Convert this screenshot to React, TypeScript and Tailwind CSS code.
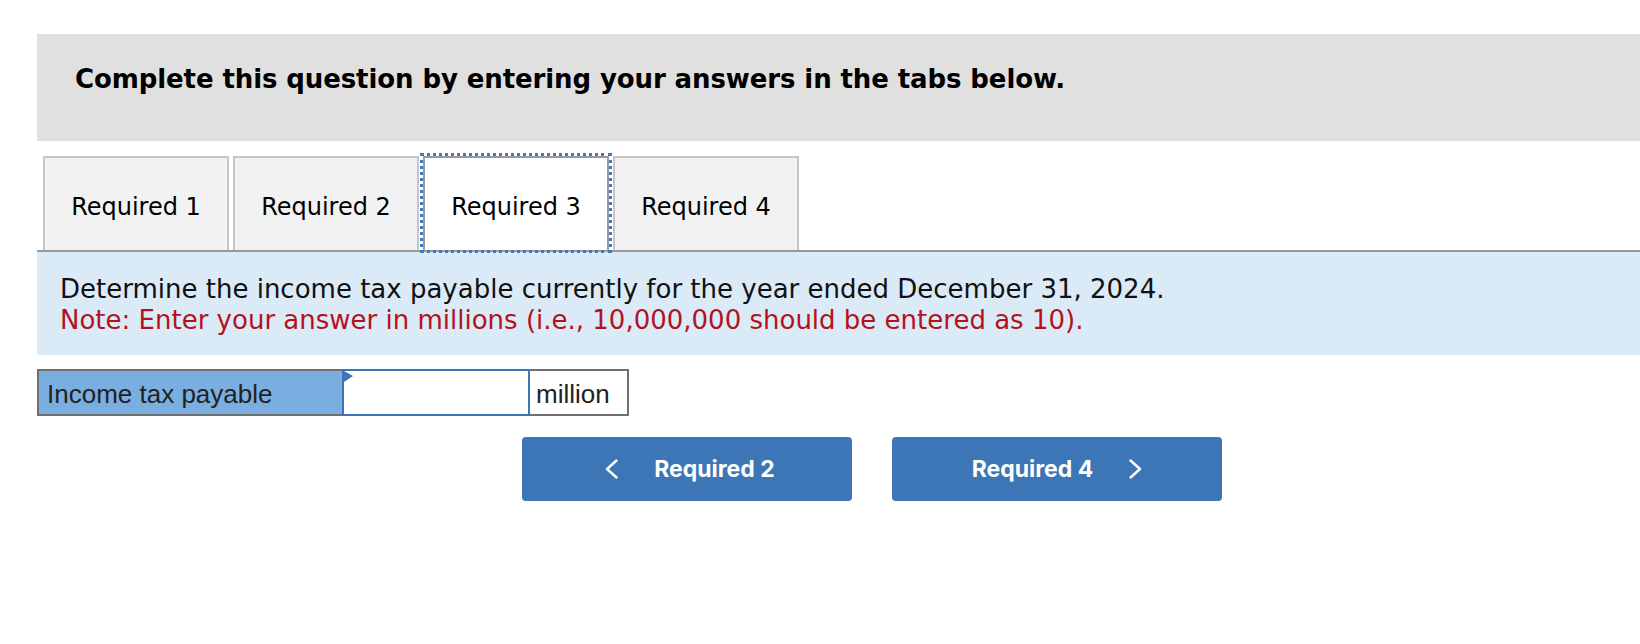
import React, { useState } from "react";

const tabs = ["Required 1", "Required 2", "Required 3", "Required 4"];

const Chevron = ({ dir }: { dir: "left" | "right" }) => (
  <svg width="13" height="20" viewBox="0 0 13 20" fill="none">
    <path
      d={dir === "left" ? "M11.5 1.5 L2 10 L11.5 18.5" : "M1.5 1.5 L11 10 L1.5 18.5"}
      stroke="white"
      strokeWidth="2.4"
      strokeLinecap="round"
      strokeLinejoin="round"
    />
  </svg>
);

const App = () => {
  const [active, setActive] = useState(2);
  const [value, setValue] = useState("");

  return (
    <div className="min-h-[644px] bg-white pt-[34px] pl-[37px] font-['DejaVu_Sans',sans-serif] text-black">
      <div className="h-[107px] bg-[#e0e0e0] pl-[38px] pt-[29px]">
        <h2 className="text-[26px] font-bold leading-[32px] tracking-[-0.1px]">
          Complete this question by entering your answers in the tabs below.
        </h2>
      </div>

      <div className="mt-[15px] flex gap-[4px] border-b-2 border-[#999999] pl-[6px]">
        {tabs.map((t, i) => (
          <button
            key={t}
            onClick={() => setActive(i)}
            className={
              i === active
                ? "h-[94px] w-[186px] border-2 border-b-0 border-[#9a9a9a] bg-white pt-[6px] text-[24px] outline-[3px] outline-dotted outline-[#3b7bc8]"
                : "h-[94px] w-[186px] border-2 border-b-0 border-[#c6c6c6] bg-[#f2f2f2] pt-[6px] text-[24px]"
            }
          >
            {t}
          </button>
        ))}
      </div>

      <div className="bg-[#dbeaf7] pl-[23px] pt-[22px] pb-[19px] text-[26px] leading-[31px]">
        <p className="text-[#111111]">
          Determine the income tax payable currently for the year ended December 31, 2024.
        </p>
        <p className="text-[#b3121c]">
          Note: Enter your answer in millions (i.e., 10,000,000 should be entered as 10).
        </p>
      </div>

      <div className="mt-[14px] flex h-[47px] font-['Liberation_Sans',Arial,sans-serif] text-[26px] text-[#222222]">
        <div className="flex w-[305px] items-center border-2 border-r-0 border-[#6f6f6f] bg-[#7baee0] pl-[8px] pt-[4px]">
          Income tax payable
        </div>
        <div className="relative w-[188px] border-2 border-[#3d74b5] bg-white">
          <svg className="absolute left-0 top-0" width="9" height="12" viewBox="0 0 9 12">
            <polygon points="0,0 9,5 0,11" fill="#3d74b5" />
          </svg>
          <input
            value={value}
            onChange={(e) => setValue(e.target.value)}
            className="h-full w-full bg-transparent px-2 text-right outline-none"
          />
        </div>
        <div className="flex w-[99px] items-center border-2 border-l-0 border-[#6f6f6f] bg-white pl-[6px] pt-[4px]">
          million
        </div>
      </div>

      <div className="mt-[21px] flex gap-[40px] pl-[485px] font-['Inter',sans-serif] text-[23px] font-bold text-white">
        <button className="flex h-[64px] w-[330px] items-center justify-center gap-[36px] rounded-[4px] bg-[#3c76b6] pl-[6px]">
          <Chevron dir="left" />
          <span>Required 2</span>
        </button>
        <button className="flex h-[64px] w-[330px] items-center justify-center gap-[36px] rounded-[4px] bg-[#3c76b6]">
          <span>Required 4</span>
          <Chevron dir="right" />
        </button>
      </div>
    </div>
  );
};

export default App;
